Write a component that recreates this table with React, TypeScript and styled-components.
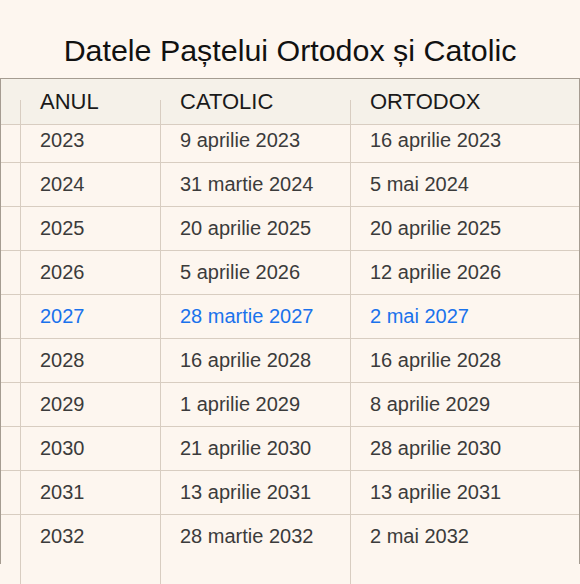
import React from 'react';
import styled, { createGlobalStyle } from 'styled-components';

const GlobalStyle = createGlobalStyle`
    html, body {
        margin: 0;
        padding: 0;
        background: #fdf6ef;
        font-family: "Liberation Sans", Arial, sans-serif;
    }
    body {
        overflow: hidden;
    }
`;

interface EasterRow {
    year: number;
    catholic: string;
    orthodox: string;
}

const ROWS: EasterRow[] = [
    { year: 2023, catholic: '9 aprilie 2023', orthodox: '16 aprilie 2023' },
    { year: 2024, catholic: '31 martie 2024', orthodox: '5 mai 2024' },
    { year: 2025, catholic: '20 aprilie 2025', orthodox: '20 aprilie 2025' },
    { year: 2026, catholic: '5 aprilie 2026', orthodox: '12 aprilie 2026' },
    { year: 2027, catholic: '28 martie 2027', orthodox: '2 mai 2027' },
    { year: 2028, catholic: '16 aprilie 2028', orthodox: '16 aprilie 2028' },
    { year: 2029, catholic: '1 aprilie 2029', orthodox: '8 aprilie 2029' },
    { year: 2030, catholic: '21 aprilie 2030', orthodox: '28 aprilie 2030' },
    { year: 2031, catholic: '13 aprilie 2031', orthodox: '13 aprilie 2031' },
    { year: 2032, catholic: '28 martie 2032', orthodox: '2 mai 2032' },
];

const HIGHLIGHT_YEAR = 2027;

export default function App() {
    return (
        <Page>
            <GlobalStyle />
            <Title>Datele Paștelui Ortodox și Catolic</Title>
            <TableBox>
                <HeaderRow>
                    <HeaderCell $first />
                    <HeaderCell>ANUL</HeaderCell>
                    <HeaderCell>CATOLIC</HeaderCell>
                    <HeaderCell>ORTODOX</HeaderCell>
                </HeaderRow>
                {ROWS.map((row, index) => {
                    const last = index === ROWS.length - 1;
                    const active = row.year === HIGHLIGHT_YEAR;
                    return (
                        <BodyRow key={row.year} $last={last}>
                            <Cell $first $active={active} />
                            <Cell $active={active}>{row.year}</Cell>
                            <Cell $active={active}>{row.catholic}</Cell>
                            <Cell $active={active}>{row.orthodox}</Cell>
                        </BodyRow>
                    );
                })}
            </TableBox>
        </Page>
    );
}

const Page = styled.div`
    width: 580px;
    height: 584px;
    overflow: hidden;
`;

const Title = styled.h1`
    margin: 0;
    padding: 33px 0 11px;
    font-size: 30.4px;
    line-height: 34px;
    font-weight: 400;
    color: #111111;
    text-align: center;
`;

const TableBox = styled.div`
    box-sizing: border-box;
    width: 580px;
    height: 486px;
    border: 1px solid #a59c91;
    border-bottom: none;
`;

const gridColumns = `
    display: grid;
    grid-template-columns: 19px 140px 190px 1fr;
`;

const HeaderRow = styled.div`
    ${gridColumns};
    position: relative;
    z-index: 1;
    height: 45px;
    margin-bottom: -6px;
    background: #f5f1e9;
    border-bottom: 1px solid #d8cdc1;
`;

const HeaderCell = styled.div<{ $first?: boolean }>`
    position: relative;
    display: flex;
    align-items: center;
    padding-left: ${({ $first }) => ($first ? 0 : 20)}px;
    font-size: 22px;
    color: #1a1a1a;

    &::before {
        content: '';
        display: ${({ $first }) => ($first ? 'none' : 'block')};
        position: absolute;
        left: 0;
        top: 21px;
        bottom: 0;
        width: 1px;
        background: #d8cdc1;
    }
`;

const BodyRow = styled.div<{ $last?: boolean }>`
    ${gridColumns};
    height: ${({ $last }) => ($last ? 90 : 43)}px;
    border-bottom: ${({ $last }) => ($last ? 'none' : '1px solid #d8cdc1')};
`;

const Cell = styled.div<{ $first?: boolean; $active?: boolean }>`
    display: flex;
    align-items: flex-start;
    padding-left: ${({ $first }) => ($first ? 0 : 19)}px;
    border-left: ${({ $first }) => ($first ? 'none' : '1px solid #d8cdc1')};
    font-size: 20px;
    line-height: 43px;
    color: ${({ $active }) => ($active ? '#1a72ec' : '#3b3b3b')};
`;
